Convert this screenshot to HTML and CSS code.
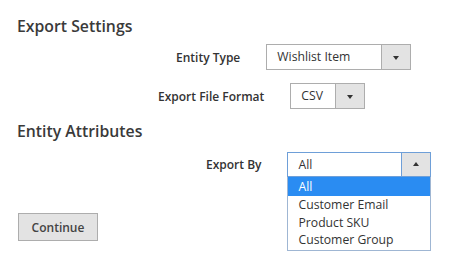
FILE: index.html
```html
<!DOCTYPE html>
<html>
<head>
<meta charset="utf-8">
<link rel="stylesheet" href="styles.css">
</head>
<body>
<div class="page">
  <h2 class="title title-first">Export Settings</h2>
  <div class="row row-entity">
    <span class="label">Entity Type</span>
    <div class="select select-entity">
      <span class="value">Wishlist Item</span>
      <span class="arrow"><span class="tri down"></span></span>
    </div>
  </div>
  <div class="row row-format">
    <span class="label">Export File Format</span>
    <div class="select select-format">
      <span class="value">CSV</span>
      <span class="arrow"><span class="tri down"></span></span>
    </div>
  </div>
  <h2 class="title title-second">Entity Attributes</h2>
  <div class="row row-by">
    <span class="label">Export By</span>
    <div class="select select-by open">
      <span class="value">All</span>
      <span class="arrow"><span class="tri up"></span></span>
      <ul class="options">
        <li class="opt selected">All</li>
        <li class="opt">Customer Email</li>
        <li class="opt">Product SKU</li>
        <li class="opt">Customer Group</li>
      </ul>
    </div>
  </div>
  <div class="actions">
    <button class="btn">Continue</button>
  </div>
</div>
</body>
</html>
```
FILE: styles.css
```css
* { box-sizing: border-box; }
html, body { margin: 0; padding: 0; background: #fff; }
body {
  font-family: "Open Sans", "Liberation Sans", sans-serif;
  color: #333;
  width: 474px;
  height: 261px;
  overflow: hidden;
}
.page { padding: 14px 0 0 17px; }
.title {
  margin: 0;
  font-size: 15.8px;
  font-weight: 600;
  color: #3a3a3a;
  line-height: 24px;
}
.title-second { margin-top: 10px; }
.row {
  display: flex;
  align-items: center;
  gap: 26px;
}
.row-entity { margin-top: 6px; padding-left: 159px; }
.row-format { margin-top: 13px; padding-left: 141px; }
.row-by { margin-top: 9px; padding-left: 189px; }
.label {
  font-size: 12px;
  font-weight: 600;
  color: #333;
}
.select {
  position: relative;
  display: flex;
  height: 26px;
  border: 1px solid #adadad;
  background: #fff;
  font-size: 12.2px;
  color: #333;
}
.select .value {
  flex: 1;
  padding-left: 10px;
  line-height: 24px;
}
.select .arrow {
  width: 29px;
  background: #e3e3e3;
  border-left: 1px solid #adadad;
  display: flex;
  align-items: center;
  justify-content: center;
}
.select-entity { width: 145px; }
.select-format { width: 75px; }
.select-by { width: 144px; height: 25px; border-color: #6e9fd8; }
.select-by .arrow { border-left-color: #6e9fd8; width: 29px; }
.select-by .value { line-height: 23px; }
.tri {
  width: 0;
  height: 0;
  border-left: 3px solid transparent;
  border-right: 3px solid transparent;
}
.tri.down { border-top: 4px solid #333; margin-top: 1px; }
.tri.up { border-bottom: 4px solid #333; margin-top: -1px; }
.options {
  position: absolute;
  left: -1px;
  right: -1px;
  top: 24px;
  margin: 0;
  padding: 0 0 1px 0;
  list-style: none;
  background: #fff;
  border: 1px solid #9fb6d3;
  border-top: none;
}
.opt {
  height: 17.5px;
  line-height: 17.5px;
  padding-left: 10px;
  font-size: 12.2px;
  color: #333;
}
.opt.selected {
  background: #2a8cf2;
  color: #fff;
  height: 19px;
  line-height: 19px;
}
.actions { margin-top: 36px; margin-left: 1px; }
.btn {
  display: block;
  width: 80px;
  height: 28px;
  background: #e3e3e3;
  border: 1px solid #adadad;
  font-family: "Open Sans", "Liberation Sans", sans-serif;
  font-size: 12px;
  font-weight: 600;
  color: #444;
  padding: 0;
}
```
